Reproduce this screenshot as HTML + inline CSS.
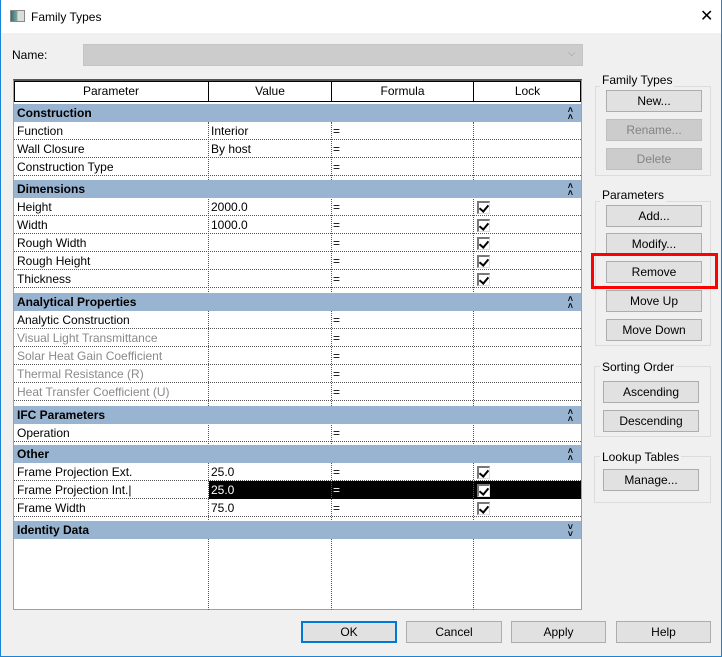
<!DOCTYPE html>
<html><head><meta charset="utf-8"><style>
*{box-sizing:border-box;margin:0;padding:0}
body{width:722px;height:657px;overflow:hidden;background:#f0f0f0;font-family:"Liberation Sans",sans-serif;font-size:12px;color:#000;position:relative}
.a{position:absolute}
.win{left:0;top:0;width:722px;height:657px;border:1px solid #1883d7;border-top:none}
.title{left:0;top:0;width:722px;height:33px;background:#fff}
.btn{position:absolute;background:#e1e1e1;border:1px solid #adadad;text-align:center;line-height:20px;height:22px}
.dis{color:#838383;background:#cccccc;border-color:#bfbfbf}
.grp{position:absolute;border:1px solid #dcdcdc}
.gl{position:absolute;background:#f0f0f0;padding:0 2px;line-height:14px}
.row{position:absolute;left:14px;width:567px;height:18px;background:#fff;border-bottom:1px dotted #555}
.row span{position:absolute;top:2px;line-height:14px;white-space:nowrap;z-index:3}
.hdr{position:absolute;z-index:5;left:14px;width:567px;height:18px;background:#99b4d1;font-weight:bold;line-height:18px;padding-left:3px}
.hdr i{position:absolute;right:8px;top:0;font-style:normal;font-size:9px;font-weight:bold;line-height:7px;padding-top:3px;text-align:center}
.cb{position:absolute;z-index:3;left:477px;top:3px;width:13px;height:13px;background:#fff;border-top:2px solid #777;border-left:2px solid #777;border-right:1px solid #ddd;border-bottom:1px solid #ddd}
.cb:after{content:"";position:absolute;left:2px;top:0;width:4px;height:7px;border-right:2px solid #000;border-bottom:2px solid #000;transform:rotate(40deg)}
.g{color:#8a8a8a}
.vl{position:absolute;z-index:4;width:0;border-left:1px dotted #555}
</style></head><body>
<div class="a title"></div>
<div class="a win"></div>
<div class="a" style="left:10px;top:10px;width:15px;height:12px;background:linear-gradient(90deg,#3a6a7a,#7fb0a0 50%,#ddd 50%);border:1px solid #888"></div>
<div class="a" style="left:31px;top:10px;font-size:12px">Family Types</div>
<div class="a" style="left:700px;top:6px;font-size:16px">✕</div>
<div class="a" style="left:12px;top:48px">Name:</div>
<div class="a" style="left:83px;top:44px;width:500px;height:22px;background:#cccccc;border:1px solid #c4c4c4"></div>
<div class="a" style="left:568px;top:48px;color:#999;font-size:10px">⌵</div>

<div class="a" style="left:13px;top:79px;width:569px;height:531px;background:#fff;border:1px solid #a0a0a0;border-top:2px solid #555"></div>
<div class="a" style="left:14px;top:81px;width:567px;height:21px;background:#fff;border:1px solid #000"></div>
<div class="a" style="left:208px;top:81px;width:1px;height:21px;background:#000"></div>
<div class="a" style="left:331px;top:81px;width:1px;height:21px;background:#000"></div>
<div class="a" style="left:473px;top:81px;width:1px;height:21px;background:#000"></div>
<div class="a" style="left:14px;top:84px;width:194px;text-align:center">Parameter</div>
<div class="a" style="left:209px;top:84px;width:122px;text-align:center">Value</div>
<div class="a" style="left:332px;top:84px;width:141px;text-align:center">Formula</div>
<div class="a" style="left:474px;top:84px;width:107px;text-align:center">Lock</div>

<div class="hdr" style="top:104px">Construction<i>˄<br>˄</i></div>
<div class="row" style="top:122px"><span style="left:3px">Function</span><span style="left:197px">Interior</span><span style="left:319px">=</span></div>
<div class="row" style="top:140px"><span style="left:3px">Wall Closure</span><span style="left:197px">By host</span><span style="left:319px">=</span></div>
<div class="row" style="top:158px"><span style="left:3px">Construction Type</span><span style="left:319px">=</span></div>

<div class="hdr" style="top:180px">Dimensions<i>˄<br>˄</i></div>
<div class="row" style="top:198px"><span style="left:3px">Height</span><span style="left:197px">2000.0</span><span style="left:319px">=</span><b class="cb" style="left:463px"></b></div>
<div class="row" style="top:216px"><span style="left:3px">Width</span><span style="left:197px">1000.0</span><span style="left:319px">=</span><b class="cb" style="left:463px"></b></div>
<div class="row" style="top:234px"><span style="left:3px">Rough Width</span><span style="left:319px">=</span><b class="cb" style="left:463px"></b></div>
<div class="row" style="top:252px"><span style="left:3px">Rough Height</span><span style="left:319px">=</span><b class="cb" style="left:463px"></b></div>
<div class="row" style="top:270px"><span style="left:3px">Thickness</span><span style="left:319px">=</span><b class="cb" style="left:463px"></b></div>

<div class="hdr" style="top:293px">Analytical Properties<i>˄<br>˄</i></div>
<div class="row" style="top:311px"><span style="left:3px">Analytic Construction</span><span style="left:319px">=</span></div>
<div class="row" style="top:329px"><span class="g" style="left:3px">Visual Light Transmittance</span><span style="left:319px">=</span></div>
<div class="row" style="top:347px"><span class="g" style="left:3px">Solar Heat Gain Coefficient</span><span style="left:319px">=</span></div>
<div class="row" style="top:365px"><span class="g" style="left:3px">Thermal Resistance (R)</span><span style="left:319px">=</span></div>
<div class="row" style="top:383px"><span class="g" style="left:3px">Heat Transfer Coefficient (U)</span><span style="left:319px">=</span></div>

<div class="hdr" style="top:406px">IFC Parameters<i>˄<br>˄</i></div>
<div class="row" style="top:424px"><span style="left:3px">Operation</span><span style="left:319px">=</span></div>

<div class="hdr" style="top:445px">Other<i>˄<br>˄</i></div>
<div class="row" style="top:463px"><span style="left:3px">Frame Projection Ext.</span><span style="left:197px">25.0</span><span style="left:319px">=</span><b class="cb" style="left:463px"></b></div>
<div class="row" style="top:481px"><span style="left:3px">Frame Projection Int.|</span><b class="a" style="left:195px;top:0;width:372px;height:18px;background:#000;z-index:2"></b><span style="left:197px;color:#fff">25.0</span><span style="left:319px;color:#fff">=</span><b class="cb" style="left:463px"></b></div>
<div class="row" style="top:499px"><span style="left:3px">Frame Width</span><span style="left:197px">75.0</span><span style="left:319px">=</span><b class="cb" style="left:463px"></b></div>

<div class="hdr" style="top:521px">Identity Data<i>˅<br>˅</i></div>

<div class="vl" style="left:208px;top:122px;height:488px"></div>
<div class="vl" style="left:331px;top:122px;height:488px"></div>
<div class="vl" style="left:473px;top:122px;height:488px"></div>

<div class="grp" style="left:595px;top:86px;width:116px;height:90px"></div>
<div class="gl" style="left:600px;top:73px">Family Types</div>
<div class="btn" style="left:606px;top:90px;width:96px">New...</div>
<div class="btn dis" style="left:606px;top:119px;width:96px">Rename...</div>
<div class="btn dis" style="left:606px;top:148px;width:96px">Delete</div>

<div class="grp" style="left:595px;top:201px;width:116px;height:145px"></div>
<div class="gl" style="left:600px;top:188px">Parameters</div>
<div class="btn" style="left:606px;top:205px;width:96px">Add...</div>
<div class="btn" style="left:606px;top:233px;width:96px">Modify...</div>
<div class="btn" style="left:606px;top:261px;width:96px">Remove</div>
<div class="a" style="left:591px;top:253px;width:127px;height:36px;border:3px solid #f00"></div>
<div class="btn" style="left:606px;top:290px;width:96px">Move Up</div>
<div class="btn" style="left:606px;top:319px;width:96px">Move Down</div>

<div class="grp" style="left:594px;top:366px;width:117px;height:71px"></div>
<div class="gl" style="left:600px;top:360px">Sorting Order</div>
<div class="btn" style="left:603px;top:381px;width:96px">Ascending</div>
<div class="btn" style="left:603px;top:410px;width:96px">Descending</div>

<div class="grp" style="left:594px;top:456px;width:117px;height:47px"></div>
<div class="gl" style="left:600px;top:450px">Lookup Tables</div>
<div class="btn" style="left:603px;top:469px;width:96px">Manage...</div>

<div class="btn" style="left:301px;top:621px;width:96px;border:2px solid #0078d7;line-height:18px">OK</div>
<div class="btn" style="left:406px;top:621px;width:96px">Cancel</div>
<div class="btn" style="left:511px;top:621px;width:95px">Apply</div>
<div class="btn" style="left:616px;top:621px;width:95px">Help</div>
</body></html>
